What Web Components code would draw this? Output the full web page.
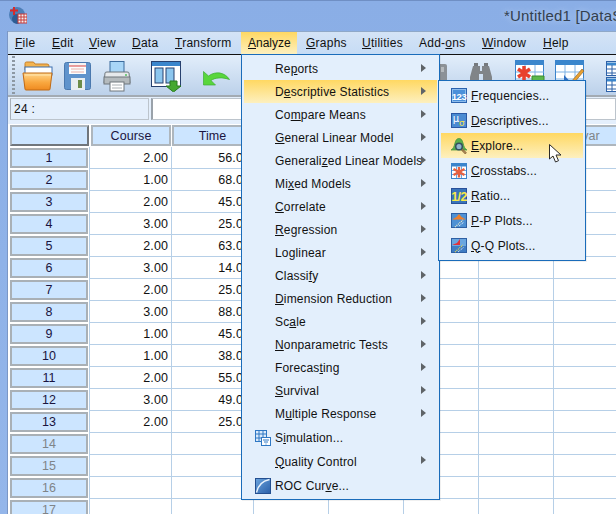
<!DOCTYPE html>
<html><head><meta charset="utf-8">
<style>
html,body{margin:0;padding:0;width:616px;height:514px;overflow:hidden;background:#8fb2e8;font-family:"Liberation Sans",Arial,sans-serif;font-size:12px;color:#111}
u{text-underline-offset:1px}
</style></head><body>
<spss-window>
  <spss-titlebar slot="title">*Untitled1 [DataSet0] - IBM SPSS Statistics Data Editor</spss-titlebar>
  <spss-menubar slot="menubar"></spss-menubar>
  <spss-toolbar slot="toolbar"></spss-toolbar>
  <spss-cellbar slot="cellbar">24 :</spss-cellbar>
  <spss-grid slot="grid"></spss-grid>

  <spss-menu slot="overlay" style="left:241px;top:54px;width:199px;height:446px">
    <spss-item h="23" sub>Re<u>p</u>orts</spss-item>
    <spss-item h="23" sub active>D<u>e</u>scriptive Statistics</spss-item>
    <spss-item h="23" sub>Co<u>m</u>pare Means</spss-item>
    <spss-item h="23" sub><u>G</u>eneral Linear Model</spss-item>
    <spss-item h="23" sub>Generali<u>z</u>ed Linear Models</spss-item>
    <spss-item h="23" sub>Mi<u>x</u>ed Models</spss-item>
    <spss-item h="23" sub><u>C</u>orrelate</spss-item>
    <spss-item h="23" sub><u>R</u>egression</spss-item>
    <spss-item h="23" sub>Lo<u>g</u>linear</spss-item>
    <spss-item h="23" sub>Classi<u>f</u>y</spss-item>
    <spss-item h="23" sub><u>D</u>imension Reduction</spss-item>
    <spss-item h="23" sub>Sc<u>a</u>le</spss-item>
    <spss-item h="23" sub><u>N</u>onparametric Tests</spss-item>
    <spss-item h="23" sub>Forecas<u>t</u>ing</spss-item>
    <spss-item h="23" sub><u>S</u>urvival</spss-item>
    <spss-item h="23" sub>M<u>u</u>ltiple Response</spss-item>
    <spss-item h="24" icon="sim">S<u>i</u>mulation...</spss-item>
    <spss-item h="24" sub><u>Q</u>uality Control</spss-item>
    <spss-item h="24" icon="roc">ROC Cur<u>v</u>e...</spss-item>
  </spss-menu>

  <spss-menu slot="overlay" style="left:438px;top:80px;width:148px;height:181px">
    <spss-item h="25" icon="freq" compact><u>F</u>requencies...</spss-item>
    <spss-item h="25" icon="desc" compact><u>D</u>escriptives...</spss-item>
    <spss-item h="25" icon="explore" compact active><u>E</u>xplore...</spss-item>
    <spss-item h="25" icon="cross" compact><u>C</u>rosstabs...</spss-item>
    <spss-item h="25" icon="ratio" compact><u>R</u>atio...</spss-item>
    <spss-item h="25" icon="pp" compact><u>P</u>-P Plots...</spss-item>
    <spss-item h="25" icon="qq" compact><u>Q</u>-Q Plots...</spss-item>
  </spss-menu>

  <spss-cursor slot="overlay" style="left:549px;top:144px"></spss-cursor>
</spss-window>

<script>
const ICONS={
sim:`<svg viewBox="0 0 16 16" width="16" height="16"><g fill="#dbeafa" stroke="#2f78c4"><rect x=".5" y=".5" width="11" height="11"/><path d="M.5 4h11M.5 8h11M4 .5v11M8 .5v11" fill="none"/></g><rect x="6.5" y="7.5" width="9" height="8" fill="#fff" stroke="#2f78c4"/><path d="M8 10h6M9 12h4M10.5 14h1" stroke="#2f78c4"/></svg>`,
roc:`<svg viewBox="0 0 16 16" width="16" height="16"><defs><linearGradient id="rg" x1="0" y1="0" x2="1" y2="1"><stop offset="0" stop-color="#6aa4de"/><stop offset="1" stop-color="#2a5fa8"/></linearGradient></defs><rect x=".5" y=".5" width="15" height="15" fill="url(#rg)" stroke="#244f90"/><path d="M1.500 14.500C3 7 7 3 14.500 1.500" fill="none" stroke="#e8f2fc" stroke-width="1.400"/></svg>`,
freq:`<svg viewBox="0 0 16 15" width="16" height="15"><rect x=".5" y=".5" width="15" height="14" fill="#4a90da" stroke="#2a62ae"/><rect x="1.500" y="1.500" width="13" height="12" fill="none" stroke="#8dbcec"/><text x="8" y="11.500" font-family="Liberation Sans" font-weight="700" font-size="9.500" letter-spacing="-.4" fill="#fff" text-anchor="middle">123</text></svg>`,
desc:`<svg viewBox="0 0 16 15" width="16" height="15"><rect x=".5" y=".5" width="15" height="14" fill="#4a8bd2" stroke="#2a58a4"/><text x="1.800" y="8.500" font-family="DejaVu Sans" font-size="10" fill="#fff">μ</text><text x="8" y="13" font-family="DejaVu Sans" font-size="9" fill="#f2e24a">σ</text></svg>`,
explore:`<svg viewBox="0 0 16 16" width="16" height="16"><path d="M0 12C2 11 3 9 4 5 5 1.500 6 .5 8 .5s3 1 4 4.500c1 4 2 6 4 7z" fill="#5ab04c" stroke="#3c8c3a" stroke-width=".7"/><path d="M10.500 11L15 15.500" stroke="#8c6a3c" stroke-width="2.400"/><path d="M11 11.500L14.500 15" stroke="#e8c890" stroke-width=".8" stroke-dasharray="1 1"/><circle cx="8" cy="8.500" r="3.300" fill="#8fb4cc" stroke="#34505f" stroke-width="1.500"/></svg>`,
cross:`<svg viewBox="0 0 16 16" width="16" height="16"><rect x=".5" y=".5" width="15" height="15" fill="#fff" stroke="#3a84cc"/><rect x="1" y="1" width="14" height="2.500" fill="#3a84cc"/><path d="M1 7.500h14M1 11.500h14M5.500 3v12M10.500 3v12" stroke="#6aa5de"/><path d="M8 4v10.500M2.500 6l11 6M13.500 6l-11 6" stroke="#e8603f" stroke-width="2.400"/></svg>`,
ratio:`<svg viewBox="0 0 16 16" width="16" height="16"><rect x=".5" y=".5" width="15" height="15" fill="#3a74ba" stroke="#28509a"/><text x="8" y="13" font-family="Liberation Sans" font-weight="700" font-size="12.500" letter-spacing="-.7" fill="#f8e84a" text-anchor="middle">1/2</text></svg>`,
pp:`<svg viewBox="0 0 16 15" width="16" height="15"><rect x=".5" y=".5" width="15" height="14" fill="#4d90d4" stroke="#2d5fa4"/><path d="M1 6.500L5.500 4 8 1l2.500 3L15 6.500z" fill="#ee7f2a"/><path d="M4 14L12 7" stroke="#f6eec8" stroke-width="1.200" stroke-dasharray="1 1"/><path d="M8 13l5-4" stroke="#fff" stroke-dasharray="1 1"/></svg>`,
qq:`<svg viewBox="0 0 16 15" width="16" height="15"><rect x=".5" y=".5" width="15" height="14" fill="#6aa6e0" stroke="#2d5fa4"/><path d="M1 7L6 5 9 1v6z" fill="#e0323a"/><path d="M1 8h14v6H1z" fill="#3f7cc4"/><path d="M4 14L12 7" stroke="#f0dc4a" stroke-width="1.200" stroke-dasharray="1 1"/><path d="M7 14l6-5" stroke="#fff" stroke-dasharray="1 1"/></svg>`
};
const TOOLS={
folder:`<svg viewBox="0 0 31 30" width="31" height="30"><defs><linearGradient id="f1" x1="0" y1="0" x2="0" y2="1"><stop offset="0" stop-color="#ffd68c"/><stop offset=".55" stop-color="#f9a840"/><stop offset="1" stop-color="#ef8a20"/></linearGradient></defs><path d="M3 7V2.500Q3 1 4.500 1h7L13 3h12q2 0 2 2v4H3z" fill="#f4b450" stroke="#c8802a"/><rect x="3" y="6" width="27" height="8" fill="#fff" stroke="#3a6fb0"/><path d="M1 12h29l-2 16q0 1-1 1H4q-1 0-1-1z" fill="url(#f1)" stroke="#c06a14"/><path d="M3 14h26" stroke="#ffe6b0"/></svg>`,
save:`<svg viewBox="0 0 27 29" width="27" height="29"><rect x=".5" y=".5" width="26" height="27" rx="2" fill="#5f93cc" stroke="#4a78ae"/><rect x="5" y="1" width="17" height="11" fill="#fbfdfe"/><path d="M5 1h17v3H5z" fill="#f4f4f4"/><path d="M7 7h13M7 10h13" stroke="#e9b0a8"/><path d="M5 4h17" stroke="#d84040"/><rect x="7" y="16" width="14" height="12" fill="#e8eef2"/><rect x="14" y="18" width="4" height="8" fill="#6c8c4a"/></svg>`,
print:`<svg viewBox="0 0 28 31" width="28" height="31"><rect x="7" y=".5" width="14" height="11" fill="#a8d6f7" stroke="#3a6a9c"/><path d="M2 12q0-1 2-1h20q2 0 2 1l1 10H1z" fill="#e6e9eb" stroke="#6f767c"/><rect x="1" y="16" width="26" height="7" fill="#b4babd" stroke="#6f767c"/><circle cx="23" cy="14" r="1" fill="#55c060"/><rect x="7" y="21" width="14" height="9" fill="#fff" stroke="#6f767c"/><path d="M9 24h10M9 27h10" stroke="#aab0b4"/></svg>`,
vars:`<svg viewBox="0 0 32 31" width="32" height="31"><rect x=".5" y=".5" width="29" height="25" fill="#fff" stroke="#27406e"/><rect x="1" y="1" width="28" height="4" fill="#3a86cc"/><rect x="4" y="7" width="8" height="15" fill="#8cc6ee" stroke="#27406e"/><rect x="15" y="7" width="8" height="15" fill="#8cc6ee" stroke="#27406e"/><path d="M19 20h7v5h4l-7.500 6-7.500-6h4z" fill="#45a830" stroke="#2a7a20"/></svg>`,
undo:`<svg viewBox="0 0 27 16" width="27" height="16"><path d="M.5 1.500V15H12.500L8 10.500C12 7.500 19 7 26.500 9.500 22 2.500 13 .5 5.500 6z" fill="#58d63c" stroke="#3cae34" stroke-width=".7"/></svg>`,
glyph:`<svg viewBox="0 0 8 16" width="8" height="16"><path d="M0 0h6q2 0 2 2v14H0z" fill="#8c9196"/><path d="M2 3h3v5H2z" fill="#b5b9bc"/></svg>`,
bino:`<svg viewBox="0 0 24 19" width="24" height="19"><path d="M5 0h4v3H5zM15 0h4v3h-4z" fill="#75797d"/><path d="M4 3h7v5h2V3h7l3 11v5h-9V11h-4v8H1v-5z" fill="#808488"/></svg>`,
astx:`<svg viewBox="0 0 30 29" width="30" height="29"><rect x=".5" y=".5" width="28" height="26" fill="#fff" stroke="#3a84cc"/><rect x="1" y="1" width="27" height="4" fill="#3a86cc"/><path d="M1 12h28M1 19h28M10 5v22M20 5v22" stroke="#7fb2e4"/><path d="M9 6v14M3 9l12 8M15 9L3 17" stroke="#e8402c" stroke-width="3.500"/><path d="M17 16h12v12H17z" fill="#5cb84a" stroke="#3a8a30"/></svg>`,
pen:`<svg viewBox="0 0 30 29" width="30" height="29"><rect x=".5" y=".5" width="28" height="26" fill="#fff" stroke="#3a84cc"/><rect x="1" y="1" width="27" height="4" fill="#3a86cc"/><path d="M1 12h28M1 19h28M10 5v22M20 5v22" stroke="#7fb2e4"/><path d="M9 27V15l11 12z" fill="#2f6ec0"/><path d="M16 22L27 9l2 2-11 13z" fill="#e8a030" stroke="#8a5a20" stroke-width=".6"/></svg>`,
tbl:`<svg viewBox="0 0 17 31" width="17" height="31"><g fill="#fff" stroke="#2f62a8"><rect x=".5" y=".5" width="16" height="14"/><rect x=".5" y="16.500" width="16" height="14"/></g><path d="M1 3h15M1 19h15" stroke="#3a86cc" stroke-width="3"/><path d="M1 8h15M1 12h15M6 4v10M1 24h15M1 28h15M6 20v10" stroke="#2f62a8"/></svg>`
};
function def(name,html,init){
  customElements.define(name,class extends HTMLElement{
    constructor(){super();this.attachShadow({mode:'open'}).innerHTML=typeof html==='function'?html(this):html;}
    connectedCallback(){init&&init.call(this)}
  });
}
def('spss-window',`<style>
:host{display:block;position:relative;width:616px;height:514px;overflow:hidden;background:linear-gradient(#8aaee6,#94b6ea);box-shadow:inset 0 1px 0 #6f8fc4}
.c{display:flex;flex-direction:column;height:514px}
.body{display:flex;flex-direction:column;margin-left:8px;flex:1;min-height:0;box-shadow:-1px 0 0 #7b97c6}
</style><div class="c"><slot name="title"></slot><div class="body"><slot name="menubar"></slot><slot name="toolbar"></slot><slot name="cellbar"></slot><slot name="grid"></slot></div></div><slot name="overlay"></slot>`);

def('spss-titlebar',()=>`<style>
:host{display:flex;align-items:center;height:31px;flex:none;overflow:hidden;white-space:nowrap;font-size:15px;color:#33404e;text-shadow:0 0 6px #c4d8f6}
.i{margin-left:9px;width:18px;height:18px;margin-top:-1px;flex:none}
.t{margin-left:477px;letter-spacing:.2px}
</style><svg class="i" viewBox="0 0 18 18"><circle cx="8" cy="9" r="8" fill="#4d7fb8"/><circle cx="8" cy="13" r="5" fill="#2e5c94"/><rect x="9" y="8" width="9" height="9" fill="#f4f4f4" stroke="#c83a3a"/><path d="M9 11h9M9 14h9M12 8v9M15 8v9" stroke="#c83a3a"/><path d="M5 1v8M1 4.500h8" stroke="#d82a2a" stroke-width="2"/></svg><span class="t"><slot></slot></span>`);

def('spss-menubar',`<style>
:host{display:flex;height:24px;flex:none;background:linear-gradient(#d4e3f6,#c6dcf5);border-top:1px solid #8fa8c8;box-sizing:border-box;border-bottom:1px solid #111;font-size:12px;letter-spacing:.25px}
.m{display:flex;flex:none;align-items:center;box-sizing:border-box;padding-left:7px;padding-bottom:1px;white-space:nowrap;color:#111}
.on{background:linear-gradient(#ffd862,#fdf0bf);letter-spacing:0}
u{text-underline-offset:1px}
</style>
<div class="m" style="width:37px"><span><u>F</u>ile</span></div><div class="m" style="width:36px"><span><u>E</u>dit</span></div><div class="m" style="width:44px;padding-left:8px"><span><u>V</u>iew</span></div><div class="m" style="width:43px"><span><u>D</u>ata</span></div><div class="m" style="width:73px"><span><u>T</u>ransform</span></div><div class="m on" style="width:56px"><span><u>A</u>nalyze</span></div><div class="m" style="width:58px;padding-left:9px"><span><u>G</u>raphs</span></div><div class="m" style="width:57px"><span><u>U</u>tilities</span></div><div class="m" style="width:63px"><span>Add-<u>o</u>ns</span></div><div class="m" style="width:61px"><span><u>W</u>indow</span></div><div class="m" style="width:60px"><span><u>H</u>elp</span></div>`);

def('spss-toolbar',()=>`<style>
:host{display:block;height:42px;flex:none;box-sizing:border-box;background:linear-gradient(#e2eefb,#bcd1ea);border-bottom:2px solid #a3abb3;overflow:hidden}
.r{display:flex;align-items:flex-start;height:40px;white-space:nowrap}
.r>*{flex:none}
.g{width:3px;height:38px;margin:1px 0 0 4px;background:repeating-linear-gradient(#8d98a3 0 2px,transparent 2px 4px)}
svg{flex:none;display:block}
</style><div class="r"><div class="g"></div>
<span style="margin:6px 0 0 7px">${TOOLS.folder}</span>
<span style="margin:7px 0 0 11px">${TOOLS.save}</span>
<span style="margin:6px 0 0 12px">${TOOLS.print}</span>
<span style="margin:6px 0 0 20px">${TOOLS.vars}</span>
<span style="margin:15px 0 0 20px">${TOOLS.undo}</span>
<span style="margin:9px 0 0 209px">${TOOLS.glyph}</span>
<span style="margin:8px 0 0 22px">${TOOLS.bino}</span>
<span style="margin:5px 0 0 22px">${TOOLS.astx}</span>
<span style="margin:5px 0 0 10px">${TOOLS.pen}</span>
<span style="margin:6px 0 0 21px">${TOOLS.tbl}</span>
</div>`);

def('spss-cellbar',`<style>
:host{display:flex;height:27px;flex:none;box-sizing:border-box;padding:1px 0 4px 2px;gap:2px;background:#e4effc;font-size:12px;letter-spacing:.25px}
.n{width:139px;flex:none;box-sizing:border-box;display:flex;align-items:center;padding-left:3px;background:#e4effc;border:1px solid #bcc4cc;border-left-color:#a8b0b8}
.v{flex:1;background:#fff;border:1px solid #bcc4cc;border-left:2px solid #9aa2aa}
</style><div class="n"><slot></slot></div><div class="v"></div>`);

def('spss-grid',()=>{
 const vals=[[2,56],[1,68],[2,45],[3,25],[2,63],[3,14],[2,25],[3,88],[1,45],[1,38],[2,55],[3,49],[2,25]];
 const f=v=>v.toFixed(2);
 let h=`<div class="hc corner"></div><div class="hc first"><span>Course</span></div><div class="hc"><span>Time</span></div>`;
 for(let i=0;i<6;i++)h+=`<div class="hc dim"><span>var</span></div>`;
 for(let r=1;r<=17;r++){
  const d=vals[r-1];
  h+=`<div class="rh${d?'':' dim'}"><span>${r}</span></div><div class="c first">${d?f(d[0]):''}</div><div class="c">${d?f(d[1]):''}</div>`;
  for(let i=0;i<6;i++)h+=`<div class="c"></div>`;
 }
 return `<style>
:host{display:block;flex:1;min-height:0;overflow:hidden;background:#fff}
.g{display:grid;grid-template-columns:80px 82px 82px repeat(6,75px);grid-auto-rows:22px;grid-template-rows:23px;padding-left:2px;background:#fff;font-size:12.500px;letter-spacing:.1px;width:700px}
.hc,.rh{display:flex;align-items:center;justify-content:center;box-sizing:border-box;background:#cce5ff;border:2px solid #a9b0b6;margin:0 1px 1px 0;color:#1a1440}
.hc{border-color:#aeb6bd;margin-top:1px;height:21px;padding-top:1px}
.hc.first{margin-left:1px}
.corner{border-color:#aeb6bd #70767c #70767c #aeb6bd}
.rh{margin:1px 2px 1px 0;height:20px}
.dim{color:#7f8488}
.c{box-sizing:border-box;border-right:1px solid #b6cfe7;border-bottom:1px solid #b6cfe7;text-align:right;padding:3px 3px 0 0;color:#111;line-height:16px}
.c.first{box-shadow:-1px 0 0 #b6cfe7}
</style><div class="g">${h}</div>`;
});

def('spss-menu',`<style>
:host{position:absolute;display:block;box-sizing:border-box;background:#e3effc;border:1px solid #1a6cba;border-width:1px 1.500px 1.500px 1.500px;padding:2px 2px 0;box-shadow:1px 1px 0 rgba(0,0,0,.06);font-size:12px;letter-spacing:.16px}
</style><slot></slot>`);

def('spss-item',el=>{
 const h=+el.getAttribute('h'),compact=el.hasAttribute('compact'),ic=el.getAttribute('icon');
 return `<style>
:host{display:flex;align-items:center;height:${h}px;box-sizing:border-box;position:relative;white-space:nowrap;color:#111;padding-top:${h===24?1:0}px}
:host([active]){background:linear-gradient(#ffd862,#fdf0bf)}
.i{width:${compact?30:31}px;flex:none;display:flex;padding-left:${compact?10:11}px;box-sizing:border-box}
.s{flex:1}
.a{position:absolute;right:11px;top:50%;margin-top:-5px;width:0;height:0;border-left:5px solid #5f6468;border-top:4.500px solid transparent;border-bottom:4.500px solid transparent}
svg{display:block;flex:none}
</style><div class="i">${ic?ICONS[ic]:''}</div><span class="s"><slot></slot></span>${el.hasAttribute('sub')?'<i class="a"></i>':''}`;
});

def('spss-cursor',`<style>:host{position:absolute;display:block;width:14px;height:20px}svg{display:block}</style><svg width="14" height="20" viewBox="0 0 14 20"><path d="M.5.500V15l3.500-3 2.500 6 3-1.300-2.500-5.700H12z" fill="#fff" stroke="#2a2a2a" stroke-linejoin="round"/></svg>`);
</script>
</body></html>
